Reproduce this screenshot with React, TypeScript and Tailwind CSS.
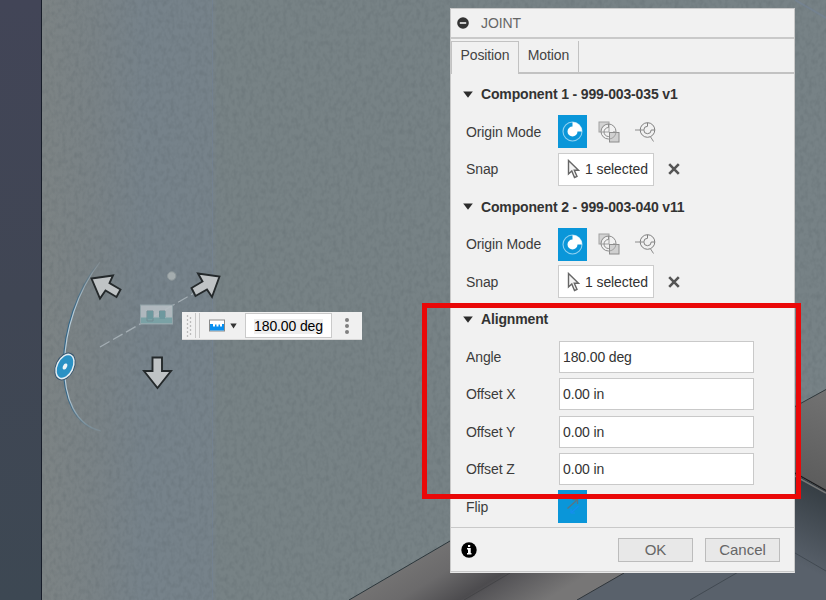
import React from "react";

interface GroupProps {
  title: string;
  children: React.ReactNode;
}

interface RowProps {
  label: string;
  children: React.ReactNode;
}

const alignmentFields = [
  { label: "Angle", value: "180.00 deg" },
  { label: "Offset X", value: "0.00 in" },
  { label: "Offset Y", value: "0.00 in" },
  { label: "Offset Z", value: "0.00 in" },
];

const Viewport = () => (
  <svg className="absolute inset-0" width="826" height="600" viewBox="0 0 826 600">
    <defs>
      <linearGradient id="side" x1="0" y1="0" x2="0" y2="1">
        <stop offset="0" stopColor="#424557" />
        <stop offset="0.5" stopColor="#404654" />
        <stop offset="1" stopColor="#3d4853" />
      </linearGradient>
      <linearGradient id="wall" x1="0" y1="0" x2="1" y2="0">
        <stop offset="0" stopColor="#7c8384" />
        <stop offset="0.07" stopColor="#798286" />
        <stop offset="0.13" stopColor="#76828a" />
        <stop offset="0.215" stopColor="#76828a" />
        <stop offset="0.225" stopColor="#778285" />
        <stop offset="1" stopColor="#778286" />
      </linearGradient>
      <linearGradient id="tube" gradientUnits="userSpaceOnUse" x1="420" y1="555" x2="485" y2="660">
        <stop offset="0" stopColor="#747373" />
        <stop offset="0.22" stopColor="#6b6a6b" />
        <stop offset="0.48" stopColor="#4c4b4e" />
        <stop offset="0.52" stopColor="#555457" />
        <stop offset="0.85" stopColor="#777676" />
      </linearGradient>
      <linearGradient id="tubeRight" gradientUnits="userSpaceOnUse" x1="795" y1="480" x2="826" y2="390">
        <stop offset="0" stopColor="#5c5c5c" />
        <stop offset="1" stopColor="#727272" />
      </linearGradient>
      <linearGradient id="floor" gradientUnits="userSpaceOnUse" x1="826" y1="490" x2="790" y2="560">
        <stop offset="0" stopColor="#353d43" />
        <stop offset="1" stopColor="#59616b" />
      </linearGradient>
      <filter id="grain" x="0" y="0" width="100%" height="100%" colorInterpolationFilters="sRGB">
        <feTurbulence type="fractalNoise" baseFrequency="0.24 0.17" numOctaves="2" seed="4" />
        <feColorMatrix values="0 0 0 0 0.3  0 0 0 0 0.34  0 0 0 0 0.36  1.6 0 0 0 -0.65" />
      </filter>
      <linearGradient id="arc" x1="0" y1="0" x2="0" y2="1">
        <stop offset="0" stopColor="#c6d6df" stopOpacity="0.1" />
        <stop offset="0.3" stopColor="#b5cbd8" />
        <stop offset="0.8" stopColor="#b5cbd8" />
        <stop offset="1" stopColor="#8fb0c4" stopOpacity="0.2" />
      </linearGradient>
      <linearGradient id="arcShade" x1="0" y1="0" x2="0" y2="1">
        <stop offset="0" stopColor="#376787" stopOpacity="0" />
        <stop offset="0.3" stopColor="#376787" />
        <stop offset="0.8" stopColor="#376787" />
        <stop offset="1" stopColor="#376787" stopOpacity="0" />
      </linearGradient>
    </defs>

    <rect x="41" width="785" height="600" fill="url(#wall)" />
    <rect x="42" width="784" height="600" filter="url(#grain)" opacity="0.27" />
    <path d="M212.500 0V600" stroke="#74839a" strokeOpacity="0.4" />
    <path d="M795 0L826 18" stroke="#74839a" strokeOpacity="0.5" strokeWidth="2" />
    <rect width="41" height="600" fill="url(#side)" />
    <path d="M41.500 0V600" stroke="#171d29" />

    {/* tube and floor in the lower right */}
    <path d="M349 600L450 541L795 406.500V600Z" fill="url(#tube)" />
    <path d="M349 600L450 541" stroke="#2c373c" fill="none" />
    <path d="M464 600L510 573" stroke="#454548" />
    <path d="M577 600L624 573L795 474L826 491V600Z" fill="url(#floor)" />
    <path d="M577 600L624 573" stroke="#30363b" />
    <path d="M690 600L740 571M795 553L826 571" stroke="#424a52" />
    <path d="M795 406.500L826 389V491L795 473Z" fill="url(#tubeRight)" />
    <path d="M795 406.500L826 389.500" stroke="#2f393d" />
    <path d="M795 476L826 493" stroke="#777777" strokeWidth="1.500" />
    <path d="M795 473L826 490.500" stroke="#1b1b1d" strokeWidth="1.300" />

    {/* rotation handle */}
    <path d="M100 262C55 320 50 420 101 431" transform="translate(-1 0)" stroke="url(#arcShade)" strokeWidth="1.500" fill="none" />
    <path d="M100 262C55 320 50 420 101 431" stroke="url(#arc)" strokeWidth="1.200" fill="none" />
    <g transform="translate(65 366.500) rotate(25)">
      <ellipse rx="9.600" ry="14.600" fill="#36546c" />
      <ellipse rx="8.700" ry="13.600" fill="#e4edf2" />
      <ellipse rx="7.200" ry="12" fill="#2a91c4" />
      <ellipse rx="2" ry="3.200" fill="#eef5f8" />
    </g>

    {/* offset axis */}
    <path d="M100 347L196 292" stroke="#a3adb3" strokeWidth="1.300" strokeDasharray="11 4" />
    <circle cx="171.700" cy="276" r="4.200" fill="#a4acae" stroke="#8e989b" />
    <rect x="140.500" y="305" width="32" height="19" fill="#b6bec3" fillOpacity="0.9" />
    <path d="M141 317.500H147V311H153V317.500H159.500V311H165V317.500H172V323.500H141Z" fill="#7aa1a5" />
    <path d="M147 311V321H153V317.500M153 317V311H147M159.500 317V311H165V317" stroke="#708a91" fill="none" />
    <path d="M147.500 311H153V319H147.500ZM159.500 311H165V319H159.500Z" fill="#6e989e" />
    <rect x="140.500" y="305" width="32" height="19" fill="none" stroke="#91a2a7" />
    <g fill="#bfc3c5" stroke="#24292b" strokeWidth="1.900" strokeLinejoin="miter">
      <path d="M91.500 278.500L113 275.500L109.500 283L120.500 289.500L116.500 297L105.500 290.500L100 298.500Z" />
      <path d="M219.500 276.500L212 297L207 289.500L195.500 296L191.500 288L202.500 281.500L198 273.500Z" />
      <path d="M152.500 357.500H162V371H171L157.500 388L144 371H152.500Z" />
    </g>
  </svg>
);

const ValueToolbar = () => (
  <div className="absolute left-[182px] top-[312px] flex h-[28px] w-[180px] items-center border-b border-[#d8d8d8] bg-[#f0f0f0]">
    <svg width="63" height="27" viewBox="0 0 63 27">
      <path d="M5.500 3V25M8.500 5V25" stroke="#bcbcbc" strokeWidth="1.300" strokeDasharray="2 2" />
      <path d="M13.500 1V26M17.500 1V26" stroke="#c8c8c8" />
      <rect x="27.500" y="8" width="15" height="11" fill="#fff" stroke="#8a8a8a" />
      <path d="M28 12H31V14.500H33V12.500H34.500V14.500H36.500V12.500H38V14.500H40V12H42V18.500H28Z" fill="#078ff0" />
      <path d="M48.300 11.500H54.700L51.500 16.500Z" fill="#333" />
    </svg>
    <div className="flex h-[25px] w-[87px] items-center justify-center border border-[#cacaca] bg-white pt-px text-[14px] tracking-[-0.13px] text-black">
      <span className="bg-[#eeeeee] leading-[15px]">180.00 deg</span>
    </div>
    <div className="ml-[13px] flex flex-col gap-[2px]">
      <span className="size-[4px] rounded-full bg-[#808080]" />
      <span className="size-[4px] rounded-full bg-[#808080]" />
      <span className="size-[4px] rounded-full bg-[#808080]" />
    </div>
  </div>
);

const Group = ({ title, children }: GroupProps) => (
  <section>
    <div className="flex h-[37.5px] items-center pl-[12px]">
      <svg width="10" height="7" viewBox="0 0 10 7">
        <path d="M0.200 0.500H9.800L5 6.800Z" fill="#2c2c2c" />
      </svg>
      <h2 className="ml-[8px] pt-[0.5px] text-[14px] font-bold tracking-[-0.15px] text-[#333]">{title}</h2>
    </div>
    {children}
  </section>
);

const Row = ({ label, children }: RowProps) => (
  <div className="flex h-[37.5px] items-center pl-[15px]">
    <span className="w-[92px] shrink-0 pt-[0.5px] text-[14px] tracking-[-0.1px] text-[#3c3c3c]">{label}</span>
    {children}
  </div>
);

const OriginMode = () => (
  <Row label="Origin Mode">
    <div className="flex h-[33px] w-[29px] items-center justify-center bg-[#0a96d9]">
      <svg width="21" height="21" viewBox="0 0 21 21">
        <circle cx="10.500" cy="10.500" r="9.500" fill="none" stroke="#8fd0f0" strokeWidth="1.100" />
        <path d="M10.500 1A9.500 9.500 0 0 1 20 10.500H15.500A5 5 0 1 1 10.500 5.500Z" fill="#fff" />
      </svg>
    </div>
    <svg className="ml-[11px]" width="22" height="22" viewBox="0 0 22 22">
      <path d="M1 1H11V3.500A7.500 7.500 0 0 0 3.500 11H1Z" fill="#d2d2d2" />
      <rect x="1" y="1" width="10" height="10" fill="none" stroke="#a2a2a2" />
      <circle cx="10.500" cy="10.500" r="7.500" fill="none" stroke="#8c8c8c" />
      <path d="M10.500 3V6.500A4.500 4.500 0 1 0 15 11H18" fill="none" stroke="#8c8c8c" />
      <rect x="11.500" y="11.500" width="9.500" height="9.500" fill="#d0d0d0" stroke="#8c8c8c" />
      <path d="M18 11.500A8 8 0 0 1 11.500 18" fill="none" stroke="#a2a2a2" />
    </svg>
    <svg className="ml-[15px]" width="22" height="22" viewBox="0 0 22 22">
      <circle cx="12.500" cy="9" r="7.300" fill="none" stroke="#808080" />
      <path d="M12.500 1.700V5.300A3.700 3.700 0 1 0 16.200 9H19.800" fill="none" stroke="#808080" />
      <path d="M0 9H8.500M15.300 15.500L18.500 20.500" fill="none" stroke="#8c8c8c" />
    </svg>
  </Row>
);

const Snap = () => (
  <Row label="Snap">
    <div className="flex h-[33px] w-[96px] items-center border border-[#ccc] bg-white pl-[8px] text-[14px] tracking-[-0.1px] text-[#333]">
      <svg width="13" height="20" viewBox="0 0 13 20">
        <path d="M1.500 1.500V15L4.800 12L7.500 18.500L10 17.400L7.300 11.300H11.500Z" fill="#f4f4f4" stroke="#666" strokeWidth="1.400" />
      </svg>
      <span className="ml-[5px] whitespace-nowrap pt-[0.5px]">1 selected</span>
    </div>
    <svg className="ml-[14px]" width="12" height="12" viewBox="0 0 12 12">
      <path d="M1.200 1.200L10.800 10.800M10.800 1.200L1.200 10.800" stroke="#555" strokeWidth="2.600" />
    </svg>
  </Row>
);

const JointPanel = () => (
  <div className="absolute left-[450px] top-[8px] flex h-[565px] w-[345px] flex-col border border-[#c9c9c9] border-b-[#e8e8e8] bg-[#f1f1f1]">
    <header className="flex h-[30px] items-center border-b-2 border-[#c9c9c9] pl-[6px] text-[14px] tracking-[-0.1px] text-[#666]">
      <svg width="12" height="12" viewBox="0 0 12 12">
        <circle cx="6" cy="6" r="5.800" fill="#333" />
        <path d="M2.800 6H9.200" stroke="#ddd" strokeWidth="1.800" />
      </svg>
      <span className="ml-[12px]">JOINT</span>
    </header>
    <nav className="flex h-[35px] pt-[2px] text-[14px] tracking-[-0.1px] text-[#444]">
      <div className="flex w-[68px] items-center justify-center border border-b-0 border-[#c2c2c2] pb-[6px]">Position</div>
      <div className="flex w-[60px] items-center justify-center border-b-2 border-r border-[#c2c2c2] pb-[2px]">Motion</div>
      <div className="flex-1 border-b-2 border-[#c2c2c2]" />
    </nav>
    <main className="h-[454px] border-b border-[#c9c9c9] pt-[1.600px]">
      <Group title="Component 1 - 999-003-035 v1">
        <OriginMode />
        <Snap />
      </Group>
      <Group title="Component 2 - 999-003-040 v11">
        <OriginMode />
        <Snap />
      </Group>
      <Group title="Alignment">
        {alignmentFields.map((field) => (
          <Row key={field.label} label={field.label}>
            <div className="ml-px flex h-[32px] w-[195px] items-center border border-[#c9c9c9] bg-white pl-[3px] text-[14px] tracking-[-0.13px] text-[#333]">
              <span className="pt-[0.5px]">{field.value}</span>
            </div>
          </Row>
        ))}
      </Group>
      <Row label="Flip">
        <div className="flex h-[33px] w-[29px] items-start justify-center bg-[#0a96d9] pt-[8px]">
          <svg width="14" height="16" viewBox="0 0 14 16">
            <path d="M1.500 10.500L11 2M6.500 1.500H11.500V6" fill="none" stroke="#597583" strokeWidth="1.300" />
            <path d="M12.500 8L6 14M5 11V15H9" fill="none" stroke="#168df0" strokeWidth="1.200" />
          </svg>
        </div>
      </Row>
    </main>
    <footer className="flex flex-1 items-center border-b border-[#c9c9c9] pl-[10px] pr-[14px] text-[15px] text-[#666]">
      <svg width="16" height="16" viewBox="0 0 16 16">
        <circle cx="8" cy="8" r="7.700" fill="#000" />
        <path d="M6 6.800H9V11.500M6 11.700H10.500" fill="none" stroke="#fff" strokeWidth="1.500" />
        <path d="M8 6.500V12M7 3.900H9.200" stroke="#fff" strokeWidth="2" />
      </svg>
      <button className="ml-auto h-[24px] w-[75px] border border-[#bcbcbc] bg-[#e8e8e8] leading-[22px]">OK</button>
      <button className="ml-[12px] h-[24px] w-[75px] border border-[#bcbcbc] bg-[#e8e8e8] leading-[22px]">Cancel</button>
    </footer>
  </div>
);

const App = () => (
  <div className="relative h-[600px] w-[826px] overflow-hidden font-['Liberation_Sans',Arial,sans-serif]">
    <Viewport />
    <ValueToolbar />
    <JointPanel />
    <div className="absolute left-[422px] top-[303px] h-[196px] w-[379px] border-5 border-[#ea0808]" />
  </div>
);

export default App;
